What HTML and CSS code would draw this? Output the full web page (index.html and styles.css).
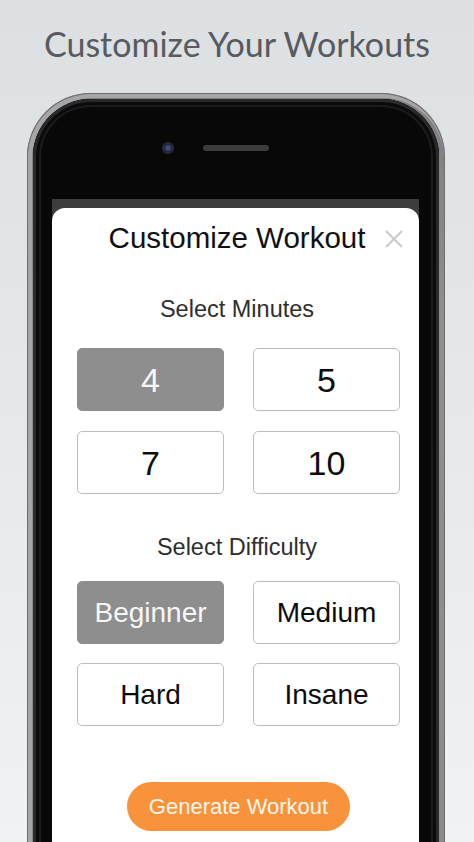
FILE: index.html
```html
<!DOCTYPE html>
<html lang="en">
<head>
<meta charset="utf-8">
<title>Customize Your Workouts</title>
<link rel="stylesheet" href="styles.css">
</head>
<body>
  <h1 class="headline">Customize Your Workouts</h1>

  <div class="phone">
    <div class="phone-body">
      <div class="sensors">
        <span class="camera"></span>
        <span class="speaker"></span>
      </div>

      <div class="screen">
        <div class="modal">
          <div class="modal-header">
            <h2 class="modal-title">Customize Workout</h2>
            <button class="close" aria-label="Close">
              <svg viewBox="0 0 20 20" width="20" height="20">
                <path d="M2 2 L18 18 M18 2 L2 18" stroke="#cacaca" stroke-width="2" fill="none"/>
              </svg>
            </button>
          </div>

          <p class="section-label">Select Minutes</p>
          <div class="choice-grid">
            <button class="choice number selected">4</button>
            <button class="choice number">5</button>
            <button class="choice number">7</button>
            <button class="choice number">10</button>
          </div>

          <p class="section-label difficulty-label">Select Difficulty</p>
          <div class="choice-grid">
            <button class="choice word selected">Beginner</button>
            <button class="choice word">Medium</button>
            <button class="choice word">Hard</button>
            <button class="choice word">Insane</button>
          </div>

          <div class="actions">
            <button class="generate">Generate Workout</button>
          </div>
        </div>
      </div>
    </div>
  </div>
</body>
</html>
```

FILE: styles.css
```css
* {
  box-sizing: border-box;
}

html, body {
  margin: 0;
  padding: 0;
  overflow: hidden;
}

body {
  width: 474px;
  height: 842px;
  background: linear-gradient(to bottom, #dce0e3 0%, #e6e9eb 50%, #f0f2f3 100%);
}

.headline {
  margin: 0;
  padding-top: 24px;
  font-family: Lato, "Open Sans", sans-serif;
  font-weight: 400;
  font-size: 34px;
  line-height: 40px;
  color: #575b5f;
  text-align: center;
}

/* handset frame; its lower half is cut off by the page edge */
.phone {
  margin: 29px 0 0 27px;
  width: 418px;
  height: 800px;
  padding: 6px 6px 0 6px;
  border-radius: 64px 64px 0 0;
  background: linear-gradient(to bottom, #7e7e81, #909093 30%, #8a8a8d);
  box-shadow: inset 0 0 0 1px #6c6c6f, inset 2px 2px 0 3px #a6a6a9;
}

.phone-body {
  height: 100%;
  display: flex;
  flex-direction: column;
  border-radius: 58px 58px 0 0;
  background: #080808;
  box-shadow: inset 0 0 0 3px #2a2a2b, inset 0 0 0 6px #0b0b0b, inset 0 0 0 8px #1b1b1c;
  padding: 43px 20px 0 19px;
}

.sensors {
  display: grid;
  grid-template-columns: 1fr auto 1fr;
  align-items: center;
  height: 12px;
}

.camera {
  justify-self: end;
  margin-right: 29px;
  width: 12px;
  height: 12px;
  border-radius: 50%;
  background: radial-gradient(circle at 50% 50%, #3c4d86 0 22%, #1d2336 45%, #2f3038 70%, #5a5a60 100%);
}

.speaker {
  width: 66px;
  height: 6px;
  border-radius: 3px;
  background: #3b3b3c;
}

.screen {
  flex: 1;
  margin-top: 45px;
  background: #3d3d3d;
  padding-top: 9px;
  display: flex;
  flex-direction: column;
}

.modal {
  flex: 1;
  background: #ffffff;
  border-radius: 13px 13px 0 0;
  font-family: "Liberation Sans", Arial, sans-serif;
  padding-top: 12px;
}

.modal-header {
  display: grid;
  grid-template-columns: 1fr auto 1fr;
  align-items: center;
}

.modal-title {
  grid-column: 2;
  margin: 0 0 0 3px;
  font-size: 29.5px;
  font-weight: 400;
  line-height: 36px;
  color: #111;
}

.close {
  grid-column: 3;
  justify-self: end;
  margin: 2px 15px 0 0;
  padding: 0;
  border: 0;
  background: none;
  width: 20px;
  height: 20px;
}

.close svg {
  display: block;
}

.section-label {
  margin: 39px 0 0 3px;
  font-size: 23.5px;
  line-height: 28px;
  color: #2e2e2e;
  text-align: center;
}

.difficulty-label {
  margin-top: 39px;
}

.choice-grid {
  display: grid;
  grid-template-columns: 147px 147px;
  grid-auto-rows: 63px;
  column-gap: 29px;
  row-gap: 20px;
  margin: 25px 0 0 25px;
}

.difficulty-label + .choice-grid {
  margin-top: 20px;
  row-gap: 19px;
}

.choice {
  margin: 0;
  padding: 0;
  border: 1px solid #bdbdbd;
  border-radius: 5px;
  background: #fff;
  color: #0c0c0c;
  font-family: "Liberation Sans", Arial, sans-serif;
  display: flex;
  align-items: center;
  justify-content: center;
}

.choice.number {
  font-size: 34px;
  padding-top: 2px;
}

.choice.word {
  font-size: 28px;
}

.choice.selected {
  background: #8e8e8e;
  border-color: #8e8e8e;
  color: #f7f7f7;
}

.actions {
  display: flex;
  justify-content: center;
  margin-top: 56px;
  padding-left: 6px;
}

.generate {
  width: 223px;
  height: 49px;
  border: 0;
  border-radius: 25px;
  background: #f8933b;
  color: #fff6ee;
  font-family: "Liberation Sans", Arial, sans-serif;
  font-size: 22px;
  padding: 0;
}
```
